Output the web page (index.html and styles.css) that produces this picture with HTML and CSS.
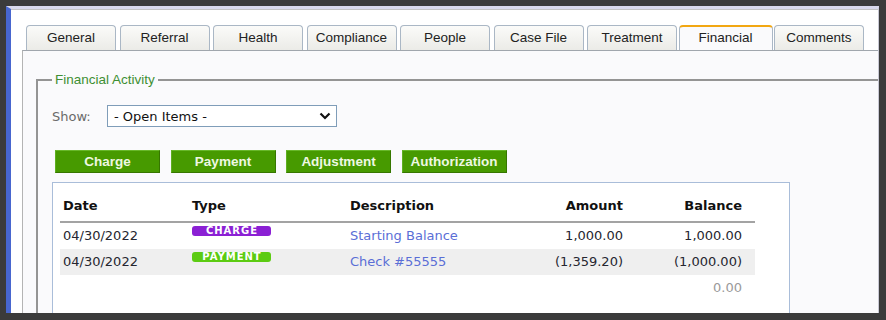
FILE: index.html
```html
<!DOCTYPE html>
<html lang="en">
<head>
    <meta charset="UTF-8">
    <title>Financial</title>
    <link rel="stylesheet" href="styles.css">
</head>
<body>
    <div class="window">
        <div class="window-inner">
            <div class="tabs">
                <div class="tab">General</div>
                <div class="tab">Referral</div>
                <div class="tab">Health</div>
                <div class="tab">Compliance</div>
                <div class="tab">People</div>
                <div class="tab">Case File</div>
                <div class="tab">Treatment</div>
                <div class="tab active">Financial</div>
                <div class="tab">Comments</div>
            </div>

            <div class="panel">
                <fieldset class="activity">
                    <legend>Financial Activity</legend>

                    <div class="show-row">
                        <span class="show-label">Show:</span>
                        <div class="select-box">
                            <span>- Open Items -</span>
                            <svg class="chevron" width="12" height="8" viewBox="0 0 12 8">
                                <polyline points="1.5,1.5 6,6 10.5,1.5" fill="none" stroke="#111" stroke-width="2.2"/>
                            </svg>
                        </div>
                    </div>

                    <div class="actions">
                        <button class="btn">Charge</button>
                        <button class="btn">Payment</button>
                        <button class="btn">Adjustment</button>
                        <button class="btn">Authorization</button>
                    </div>

                    <div class="ledger-box">
                        <table class="ledger">
                            <colgroup>
                                <col style="width:129px">
                                <col style="width:158px">
                                <col style="width:160px">
                                <col style="width:129px">
                                <col style="width:119px">
                            </colgroup>
                            <thead>
                                <tr>
                                    <th>Date</th>
                                    <th>Type</th>
                                    <th>Description</th>
                                    <th class="num">Amount</th>
                                    <th class="num">Balance</th>
                                </tr>
                            </thead>
                            <tbody>
                                <tr>
                                    <td>04/30/2022</td>
                                    <td class="type"><span class="badge charge">CHARGE</span></td>
                                    <td><a href="#">Starting Balance</a></td>
                                    <td class="num">1,000.00</td>
                                    <td class="num">1,000.00</td>
                                </tr>
                                <tr class="alt">
                                    <td>04/30/2022</td>
                                    <td class="type"><span class="badge payment">PAYMENT</span></td>
                                    <td><a href="#">Check #55555</a></td>
                                    <td class="num">(1,359.20)</td>
                                    <td class="num">(1,000.00)</td>
                                </tr>
                                <tr class="total">
                                    <td></td>
                                    <td></td>
                                    <td></td>
                                    <td></td>
                                    <td class="num">0.00</td>
                                </tr>
                            </tbody>
                        </table>
                    </div>
                </fieldset>
            </div>
        </div>
    </div>
</body>
</html>
```

FILE: styles.css
```css
html, body {
    margin: 0;
    height: 100%;
}

body {
    background-color: #3b3b3b;
    padding: 6px 7px 7px 6px;
    box-sizing: border-box;
    overflow: hidden;
}

.window {
    height: 307px;
    box-sizing: border-box;
    background-color: #fff;
    border-left: 5px solid #4766cf;
    border-top: 3px solid #d9d9ec;
    border-right: 1px solid #c8c8d4;
    overflow: hidden;
}

.window-inner {
    height: 100%;
    box-sizing: border-box;
    border-top: 1px solid #c4c4c4;
    padding: 15px 0 0 11px;
}

/* tabs */
.tabs {
    display: flex;
    gap: 3.5px;
    padding-left: 4px;
    height: 25px;
}

.tab {
    width: 90px;
    height: 25px;
    box-sizing: border-box;
    border: 1px solid #aab7c5;
    border-bottom: none;
    border-radius: 4px 4px 0 0;
    background: linear-gradient(#fbfbf9, #ebebe7);
    font-family: "Liberation Sans", Arial, sans-serif;
    font-size: 13.5px;
    line-height: 23px;
    color: #222;
    text-align: center;
}

.tab.active {
    width: 94px;
    margin: 0 -2px;
    border-top: 2px solid #f2a712;
    background: #fafafc;
    line-height: 22px;
}

/* panel */
.panel {
    height: 100%;
    box-sizing: border-box;
    border-top: 1px solid #a0a6ad;
    border-left: 1px solid #b4b4b4;
    background-color: #fafafc;
    padding-left: 13px;
}

.activity {
    margin: 21px -40px 0 0;
    border: 2px solid #949494;
    padding: 0 0 0 14px;
    min-width: 0;
}

.activity legend {
    padding: 0 3px;
    font-family: "Liberation Sans", Arial, sans-serif;
    font-size: 13.5px;
    line-height: 16px;
    color: #3e8f33;
}

.show-row {
    display: flex;
    align-items: center;
    margin-top: 17px;
    font-family: "DejaVu Sans", Verdana, sans-serif;
    font-size: 13px;
}

.show-label {
    flex: 0 0 55px;
    color: #6a6a6a;
}

.select-box {
    width: 230px;
    height: 22px;
    box-sizing: border-box;
    border: 1px solid #7f9db9;
    background-color: #fff;
    display: flex;
    align-items: center;
    justify-content: space-between;
    padding: 0 5px 0 6px;
    color: #111;
}

/* buttons */
.actions {
    display: flex;
    gap: 10.5px;
    margin: 23px 0 0 3px;
}

.btn {
    width: 105px;
    height: 23px;
    box-sizing: border-box;
    padding: 0;
    background-color: #479a00;
    border: 1px solid #367600;
    border-top-color: #68b82a;
    border-left-color: #5eae20;
    color: #eef8e2;
    font-family: "Liberation Sans", Arial, sans-serif;
    font-size: 13.5px;
    font-weight: bold;
    cursor: pointer;
}

/* ledger */
.ledger-box {
    width: 738px;
    height: 200px;
    box-sizing: border-box;
    margin-top: 9px;
    border: 1px solid #a9bdd9;
    background-color: #fff;
    padding: 9px 0 0 7px;
}

.ledger {
    width: 695px;
    table-layout: fixed;
    border-collapse: separate;
    border-spacing: 0;
    font-family: "DejaVu Sans", Verdana, sans-serif;
    font-size: 13px;
    line-height: 16px;
    color: #262630;
}

.ledger th {
    text-align: left;
    font-weight: bold;
    color: #111;
    padding: 6px 3px 7px;
    border-bottom: 2px solid #a3a3a3;
}

.ledger td {
    padding: 5px 3px;
}

.ledger .num {
    text-align: right;
    padding-right: 13px;
}

.ledger td.type {
    vertical-align: top;
    padding-top: 3px;
    padding-bottom: 0;
}

.ledger tr.alt td {
    background-color: #efefef;
}

.ledger tr.total td {
    color: #9a9a9a;
}

.ledger a {
    color: #5a6ed6;
    text-decoration: none;
}

.badge {
    display: block;
    width: 79px;
    height: 10px;
    box-sizing: border-box;
    padding-left: 1px;
    border-radius: 3px;
    font-family: "DejaVu Sans", Verdana, sans-serif;
    font-size: 10px;
    font-weight: bold;
    line-height: 10px;
    letter-spacing: 1px;
    text-align: center;
    color: #fff;
}

.badge.charge {
    background-color: #8b20d4;
}

.badge.payment {
    background-color: #5ccb12;
}
```
